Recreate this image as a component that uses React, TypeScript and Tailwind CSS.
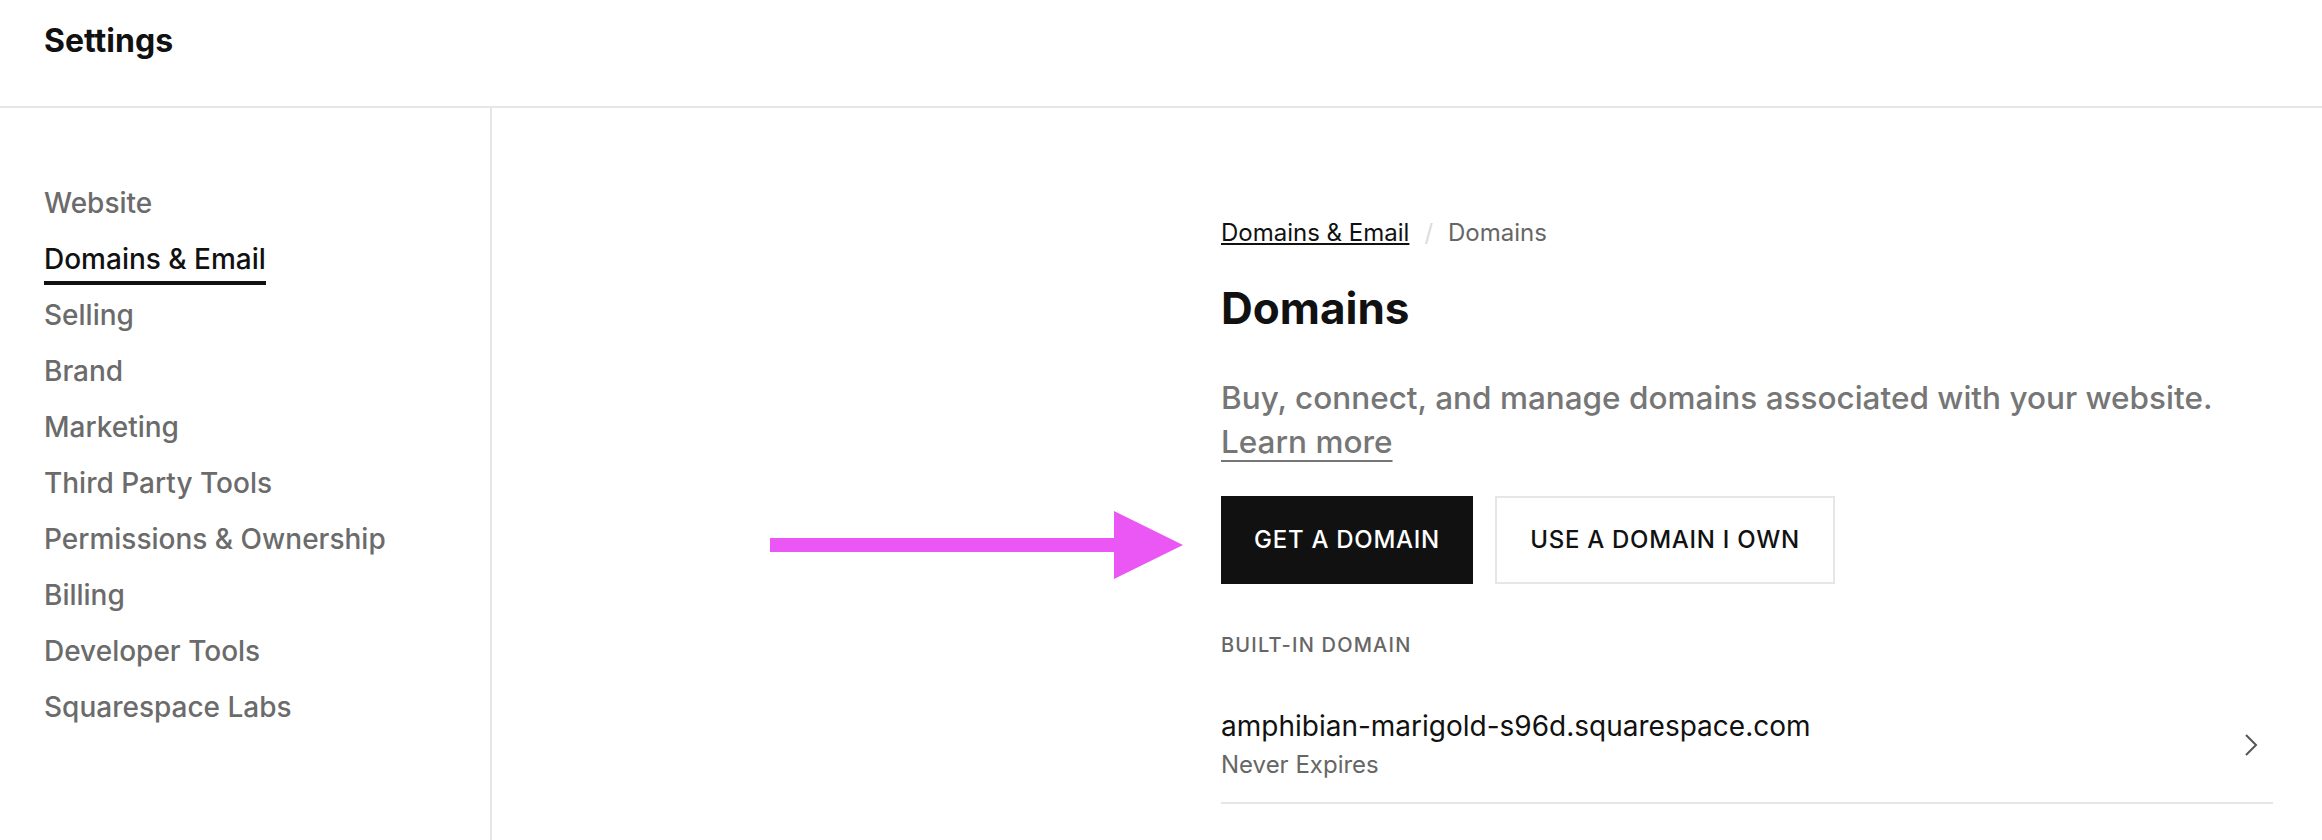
import React from "react";

const navItems = [
  "Website",
  "Domains & Email",
  "Selling",
  "Brand",
  "Marketing",
  "Third Party Tools",
  "Permissions & Ownership",
  "Billing",
  "Developer Tools",
  "Squarespace Labs",
];

export default function App() {
  return (
    <div className="w-[2322px] h-[840px] bg-white flex flex-col font-['Inter',sans-serif] text-[#111] overflow-hidden">
      <header className="h-[108px] shrink-0 border-b-2 border-[#e6e6e6] pl-[44px] pt-[21px]">
        <h1 className="text-[32px] leading-[40px] font-bold text-[#111]">Settings</h1>
      </header>
      <div className="flex flex-1 min-h-0">
        <nav className="w-[492px] shrink-0 border-r-2 border-[#e6e6e6] pt-[75px] pl-[44px] flex flex-col">
          {navItems.map((item) => {
            const active = item === "Domains & Email";
            return (
              <div key={item} className="h-[56px]">
                {active ? (
                  <span className="inline-block text-[28px] leading-[40px] font-medium text-[#111] border-b-4 border-[#111] pb-[2px]">
                    {item}
                  </span>
                ) : (
                  <span className="inline-block text-[28px] leading-[40px] font-medium text-[#6b6b6b]">{item}</span>
                )}
              </div>
            );
          })}
        </nav>
        <main className="flex-1 pl-[729px] pr-[49px] pt-[109px]">
          <div className="flex items-center text-[24px] leading-[32px]">
            <span className="text-[#111] underline decoration-2 underline-offset-[2px]">Domains &amp; Email</span>
            <span className="text-[#dcdcdc] mx-[15px]">/</span>
            <span className="text-[#666]">Domains</span>
          </div>
          <h2 className="mt-[35px] text-[44px] leading-[48px] font-bold text-[#111]">Domains</h2>
          <p className="mt-[44px] text-[31.5px] leading-[44px] font-medium text-[#767676]">
            Buy, connect, and manage domains associated with your website.
            <br />
            <span className="underline decoration-2 underline-offset-[7px] decoration-[#767676]">Learn more</span>
          </p>
          <div className="relative mt-[32px] flex gap-[22px]">
            <svg
              className="absolute top-[15px] right-[calc(100%+38px)]"
              width="413"
              height="68"
              viewBox="0 0 413 68"
            >
              <polygon points="0,27 344,27 344,0 413,34 344,68 344,41 0,41" fill="#eb57f5" />
            </svg>
            <button className="w-[252px] h-[88px] bg-[#111] text-white text-[24px] font-medium tracking-[0.03em] flex items-center justify-center">
              GET A DOMAIN
            </button>
            <button className="w-[340px] h-[88px] bg-white border-2 border-[#e6e6e6] text-[#111] text-[24px] font-medium tracking-[0.03em] flex items-center justify-center">
              USE A DOMAIN I OWN
            </button>
          </div>
          <div className="mt-[49px] text-[20px] leading-[24px] font-medium tracking-[0.06em] text-[#666]">
            BUILT-IN DOMAIN
          </div>
          <div className="mt-[51px] flex items-center justify-between border-b-2 border-[#e6e6e6] pb-[21px] pr-[15px]">
            <div className="flex flex-col">
              <span className="text-[28px] leading-[36px] text-[#111]">amphibian-marigold-s96d.squarespace.com</span>
              <span className="mt-[5px] text-[24px] leading-[32px] text-[#666]">Never Expires</span>
            </div>
            <svg width="14" height="22" viewBox="0 0 14 22" fill="none">
              <path d="M2 1 L12 11 L2 21" stroke="#555" strokeWidth="2" />
            </svg>
          </div>
        </main>
      </div>
    </div>
  );
}
